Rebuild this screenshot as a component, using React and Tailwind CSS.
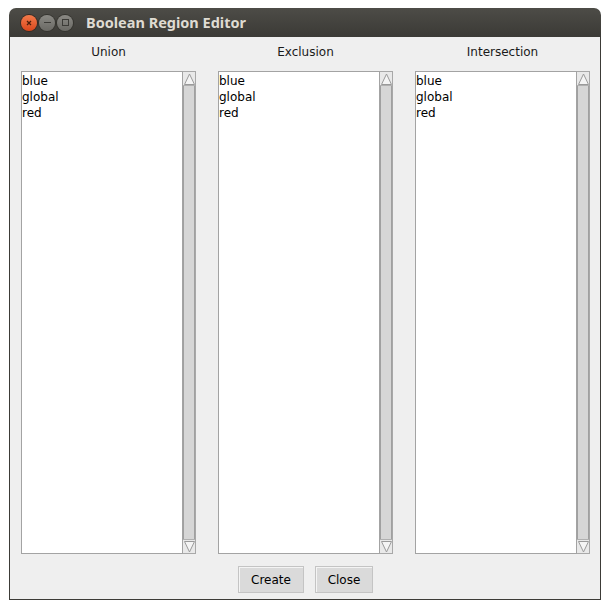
const regions = ["blue", "global", "red"];
const columns = ["Union", "Exclusion", "Intersection"];

const ArrowUp = () => (
  <svg width="11" height="12" viewBox="0 0 11 12" className="block">
    <polygon points="5.5,1 10.5,11.5 0.5,11.5" fill="#f4f4f4" stroke="#9a9a9a" strokeWidth="1" />
  </svg>
);

const ArrowDown = () => (
  <svg width="11" height="12" viewBox="0 0 11 12" className="block">
    <polygon points="0.5,0.5 10.5,0.5 5.5,11" fill="#f4f4f4" stroke="#9a9a9a" strokeWidth="1" />
  </svg>
);

const RegionList = ({ title }) => {
  return (
    <div className="flex flex-col">
      <div className="h-[14px] leading-[14px] text-center text-[12px] text-[#1a1a1a]">{title}</div>
      <div className="mt-[12px] flex h-[483px]">
        <div className="w-[162px] border border-[#a3a3a3] bg-white pt-[1px]">
          {regions.map(name => (
            <div key={name} className="h-[16px] leading-[16px] text-[12px] text-black">{name}</div>
          ))}
        </div>
        <div className="flex w-[13px] flex-col border-y border-r border-[#a8a8a8] bg-[#e6e6e6]">
          <div className="flex h-[14px] items-center justify-center border-b border-[#b0b0b0] bg-[#e9e9e9]">
            <ArrowUp />
          </div>
          <div className="flex-1 border-x border-[#a0a0a0] bg-[#d6d6d6]"></div>
          <div className="flex h-[14px] items-center justify-center border-t border-[#b0b0b0] bg-[#e9e9e9]">
            <ArrowDown />
          </div>
        </div>
      </div>
    </div>
  );
};

const App = () => {
  return (
    <div className="h-[606px] w-[609px] bg-white pl-[9px] pt-[8px]" style={{ fontFamily: '"DejaVu Sans", sans-serif' }}>
      <div className="flex w-[592px] flex-col">
        <div className="flex h-[29px] items-center rounded-t-[7px] bg-gradient-to-b from-[#4d4c47] to-[#3b3a36] pl-[12px]">
          <div className="flex h-[16px] w-[16px] items-center justify-center rounded-full bg-gradient-to-b from-[#f37a4a] to-[#d9461a] shadow-[0_0_0_1px_#3a2a22]">
            <svg width="6" height="6" viewBox="0 0 6 6">
              <path d="M1 1 L5 5 M5 1 L1 5" stroke="#4a1f0c" strokeWidth="1.3" />
            </svg>
          </div>
          <div className="ml-[2px] flex h-[16px] w-[16px] items-center justify-center rounded-full bg-gradient-to-b from-[#8a8984] to-[#6a6964] shadow-[0_0_0_1px_#35342f]">
            <div className="h-[1.5px] w-[7px] bg-[#3c3b37]"></div>
          </div>
          <div className="ml-[2px] flex h-[16px] w-[16px] items-center justify-center rounded-full bg-gradient-to-b from-[#8a8984] to-[#6a6964] shadow-[0_0_0_1px_#35342f]">
            <div className="h-[7px] w-[7px] border border-[#3c3b37]"></div>
          </div>
          <span className="ml-[13px] text-[14.5px] font-bold text-[#dfdbd2]" style={{ fontFamily: '"Noto Sans", sans-serif' }}>
            Boolean Region Editor
          </span>
        </div>
        <div className="flex h-[563px] flex-col border-x border-b border-[#3c3b37] bg-[#efefef] pl-[11px] pt-[8px]">
          <div className="grid grid-cols-[175px_175px_175px] gap-[22px]">
            {columns.map(c => (
              <RegionList key={c} title={c} />
            ))}
          </div>
          <div className="mt-[12px] flex justify-center gap-[11px] pr-[10px]">
            <button className="h-[27px] w-[66px] border border-[#c4c4c4] bg-[#dadada] text-[12px] text-black shadow-[inset_1px_1px_0_#f4f4f4]">
              Create
            </button>
            <button className="h-[27px] w-[58px] border border-[#c4c4c4] bg-[#dadada] text-[12px] text-black shadow-[inset_1px_1px_0_#f4f4f4]">
              Close
            </button>
          </div>
        </div>
      </div>
    </div>
  );
};

export default App;
